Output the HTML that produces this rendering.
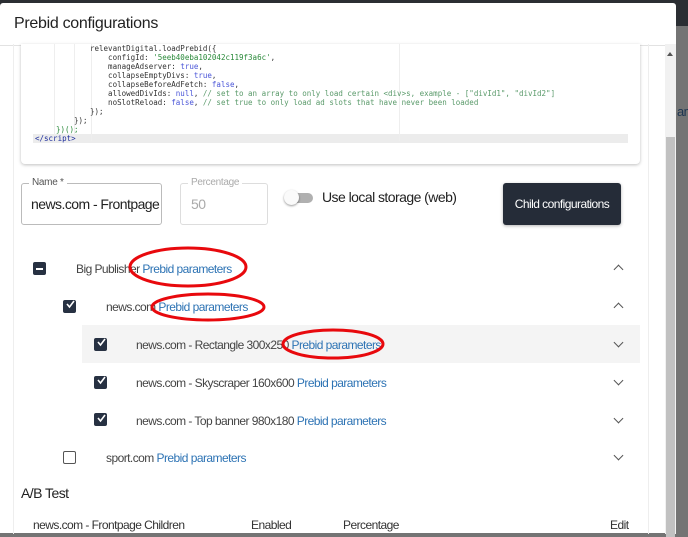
<!DOCTYPE html>
<html><head><style>
*{margin:0;padding:0;box-sizing:border-box}
body{width:688px;height:524px;overflow:hidden;background:#747474;font-family:"Liberation Sans",sans-serif;position:relative;letter-spacing:-0.55px}
.topdark{position:absolute;left:0;top:0;width:688px;height:26px;background:#2b2e33}
.dlg{position:absolute;left:0;top:3px;width:676px;height:530px;background:#fff;border-radius:3px 3px 0 0;overflow:hidden}
.hdr{height:43px;border-bottom:1px solid #e2e2e2;padding:12px 0 0 14px;font-size:16px;color:#222;letter-spacing:-0.3px}
.sb{position:absolute;left:665px;top:44px;width:11px;height:490px;background:#f1f1f1}
.sb .th{position:absolute;left:1px;top:93px;width:9px;height:400px;background:#c1c1c1}
.sb .ar{position:absolute;left:2px;top:8px;width:0;height:0;border-left:3px solid transparent;border-right:3px solid transparent;border-bottom:4px solid #555}
.panel{position:absolute;left:13px;top:44px;width:636px;height:490px;border-left:1px solid #eee;border-right:1px solid #eee}
.code{position:absolute;left:21px;top:44px;width:619px;height:120px;border-radius:0 0 4px 4px;box-shadow:0 1px 3px rgba(0,0,0,.25);background:#fff;overflow:hidden;letter-spacing:0}
.code pre{position:absolute;left:0;top:0;font-family:"DejaVu Sans Mono",monospace;font-size:7.5px;line-height:9px;color:#333;white-space:pre}
.g{color:#2a8a3a}.b{color:#4a55d8}.c{color:#5a9a6a}.t{color:#1a2a9a}
.hl{position:absolute;left:12px;top:90px;width:595px;height:9px;background:#ececec}
.vl{position:absolute;top:0;width:1px;height:97px;background:#eee}
.fld{position:absolute;border:1px solid #c8c8c8;border-radius:3px}
.lab{position:absolute;font-size:10px;background:#fff;padding:0 3px;letter-spacing:-0.3px}
.row{position:absolute;left:0;width:676px;font-size:12px;color:#444}
.cb{position:absolute;width:13px;height:13px;border-radius:2px;background:#273142}
.cb.e{background:#fff;border:1.5px solid #555}
.lk{color:#2d73b4}
.chev{position:absolute;left:615px;width:7px;height:7px;border-left:1.5px solid #555;border-bottom:1.5px solid #555}
</style></head><body>
<div class="topdark"></div>
<div class="dlg">
<div class="hdr">Prebid configurations</div>
</div>
<div class="panel"></div>
<div class="code">
<div class="hl"></div>
<div class="vl" style="left:33px"></div><div class="vl" style="left:53px"></div><div class="vl" style="left:70px"></div><div class="vl" style="left:378px"></div>
<pre style="left:69px;top:0px">relevantDigital.loadPrebid({
    configId: <span class="g">'5eeb40eba102042c119f3a6c'</span>,
    manageAdserver: <span class="b">true</span>,
    collapseEmptyDivs: <span class="b">true</span>,
    collapseBeforeAdFetch: <span class="b">false</span>,
    allowedDivIds: <span class="b">null</span>, <span class="c">// set to an array to only load certain &lt;div&gt;s, example - ["divId1", "divId2"]</span>
    noSlotReload: <span class="b">false</span>, <span class="c">// set true to only load ad slots that have never been loaded</span>
});</pre>
<pre style="left:53px;top:72px">});</pre>
<pre style="left:35px;top:81px"><span class="g">})();</span></pre>
<pre style="left:14px;top:90px"><span class="t">&lt;/script&gt;</span></pre>
</div>
<div class="fld" style="left:21px;top:183px;width:141px;height:42px;border-color:#bbb"></div>
<div class="lab" style="left:29px;top:177px;color:#555">Name *</div>
<div style="position:absolute;left:31px;top:196px;font-size:14px;color:#222">news.com - Frontpage</div>
<div class="fld" style="left:180px;top:183px;width:88px;height:42px;border-color:#ddd"></div>
<div class="lab" style="left:188px;top:177px;color:#aaa">Percentage</div>
<div style="position:absolute;left:191px;top:196px;font-size:14px;color:#aaa">50</div>
<div style="position:absolute;left:288px;top:193px;width:25px;height:10px;border-radius:5px;background:#b0b0b0"></div>
<div style="position:absolute;left:284px;top:190px;width:15px;height:15px;border-radius:50%;background:#fafafa;box-shadow:0 1px 2px rgba(0,0,0,.4)"></div>
<div style="position:absolute;left:322px;top:189px;font-size:14px;color:#222">Use local storage (web)</div>
<div style="position:absolute;left:503px;top:183px;width:118px;height:42px;background:#252c38;border-radius:3px;box-shadow:0 1px 3px rgba(0,0,0,.3);color:#fff;font-size:12px;line-height:42px;text-align:center">Child configurations</div>
<div style="position:absolute;left:82px;top:325px;width:558px;height:38px;background:#f4f4f4"></div>
<div class="cb" style="left:33px;top:262px"><div style="position:absolute;left:3px;top:5.5px;width:7px;height:2px;background:#fff"></div></div>
<div class="row" style="top:262px"><span style="position:absolute;left:76px">Big Publisher <span class="lk">Prebid parameters</span></span></div>
<div class="chev" style="top:266px;transform:rotate(135deg)"></div>
<div class="cb" style="left:63px;top:300px"></div>
<div class="row" style="top:300px"><span style="position:absolute;left:106px">news.com <span class="lk">Prebid parameters</span></span></div>
<div class="chev" style="top:304px;transform:rotate(135deg)"></div>
<div class="cb" style="left:94px;top:338px"></div>
<div class="row" style="top:338px"><span style="position:absolute;left:136px">news.com - Rectangle 300x250 <span class="lk">Prebid parameters</span></span></div>
<div class="chev" style="top:339px;transform:rotate(-45deg)"></div>
<div class="cb" style="left:94px;top:376px"></div>
<div class="row" style="top:376px"><span style="position:absolute;left:136px">news.com - Skyscraper 160x600 <span class="lk">Prebid parameters</span></span></div>
<div class="chev" style="top:377px;transform:rotate(-45deg)"></div>
<div class="cb" style="left:94px;top:413px"></div>
<div class="row" style="top:414px"><span style="position:absolute;left:136px">news.com - Top banner 980x180 <span class="lk">Prebid parameters</span></span></div>
<div class="chev" style="top:415px;transform:rotate(-45deg)"></div>
<div class="cb e" style="left:63px;top:451px"></div>
<div class="row" style="top:451px"><span style="position:absolute;left:106px">sport.com <span class="lk">Prebid parameters</span></span></div>
<div class="chev" style="top:452px;transform:rotate(-45deg)"></div>
<svg style="position:absolute;left:0;top:0" width="688" height="524">
<polyline points="67,304 69.5,307 74,301" fill="none" stroke="#fff" stroke-width="1.6"/>
<polyline points="98,342 100.5,345 105,339" fill="none" stroke="#fff" stroke-width="1.6"/>
<polyline points="98,380 100.5,383 105,377" fill="none" stroke="#fff" stroke-width="1.6"/>
<polyline points="98,418 100.5,421 105,415" fill="none" stroke="#fff" stroke-width="1.6"/>
<g fill="none" stroke="#e8090d" stroke-width="3">
<ellipse cx="188" cy="267" rx="58" ry="19"/>
<ellipse cx="208" cy="307" rx="56" ry="13"/>
<ellipse cx="333" cy="344" rx="50" ry="14"/>
</g>
</svg>
<div style="position:absolute;left:21px;top:485px;font-size:14px;color:#222">A/B Test</div>
<div style="position:absolute;left:33px;top:518px;font-size:12px;color:#333">news.com - Frontpage Children</div>
<div style="position:absolute;left:251px;top:518px;font-size:12px;color:#333">Enabled</div>
<div style="position:absolute;left:343px;top:518px;font-size:12px;color:#333">Percentage</div>
<div style="position:absolute;left:610px;top:518px;font-size:12px;color:#333">Edit</div>
<div class="sb"><div class="ar"></div><div class="th"></div></div>
<div style="position:absolute;left:677px;top:104px;font-size:13px;color:#1d3550">am</div>
</body></html>
